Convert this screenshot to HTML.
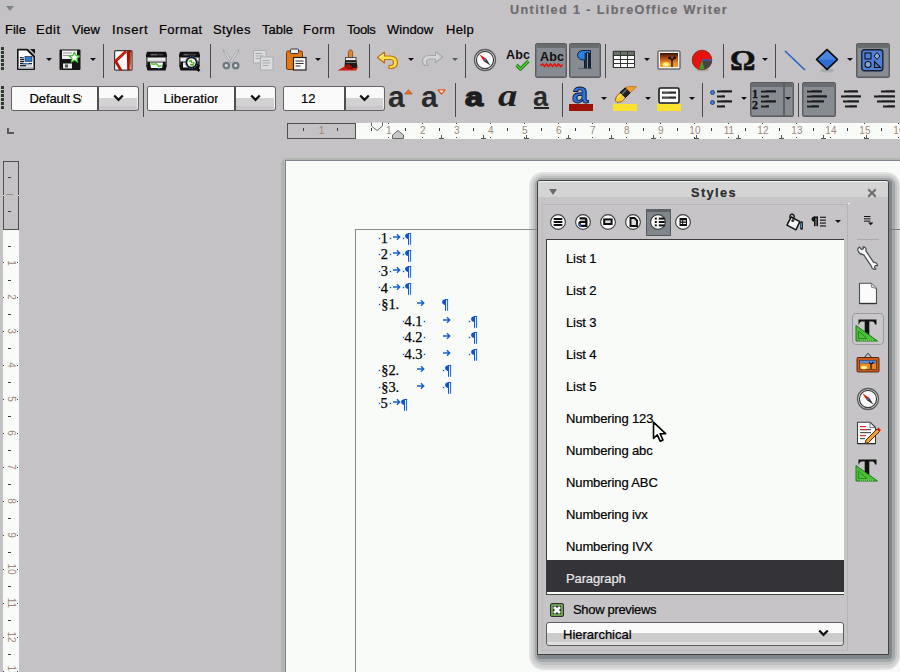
<!DOCTYPE html>
<html><head><meta charset="utf-8">
<style>
*{margin:0;padding:0;box-sizing:border-box}
html,body{width:900px;height:672px;overflow:hidden}
body{position:relative;background:#c5c2c6;font-family:"Liberation Sans",sans-serif;color:#000}
.a{position:absolute}
.t{position:absolute;white-space:nowrap;line-height:13px;font-size:13px;-webkit-text-stroke:.2px currentColor}
.sep{position:absolute;width:1px;background:#4a4a4a}
.grip{position:absolute;width:3px;background:repeating-linear-gradient(#2c3a2c 0 3px,transparent 3px 4px)}
.dd{position:absolute;width:0;height:0;border-left:3px solid transparent;border-right:3px solid transparent;border-top:3px solid #111}
.combo{position:absolute;height:25px;border:1px solid #626262;border-radius:2px;background:#f9faf9}
.cbtn{position:absolute;height:25px;border:1px solid #666;border-left:2px solid #4e4e4e;border-radius:0 3px 3px 0;box-shadow:inset -1px 0 0 #f4f4f4;background:linear-gradient(#f9faf9 0 11px,#d3d2d3 11px 19px,#c9c7c9 19px 23px,#e8e8e8 23px)}
.chev{position:absolute;width:7px;height:7px;border-right:2px solid #111;border-bottom:2px solid #111;transform:rotate(45deg)}
.tog{position:absolute;background:#868c92;border:1px solid #5a5c5e;border-radius:2px;box-shadow:inset 1px 0 0 #73767a,inset -1px 0 0 #73767a,inset 0 4px 0 #6a6d70,inset 0 -1px 0 #6f7275}
.doc{font-family:"Liberation Serif",serif;font-size:14.4px;line-height:16px;color:#000;-webkit-text-stroke:.25px #000}
.blu{color:#1f6fd1}
.li{position:absolute;left:566px;font-size:13px;line-height:13px;white-space:nowrap;letter-spacing:-.12px;-webkit-text-stroke:.2px currentColor}
.dot{width:1px;height:1px;background:#0a4fc0;box-shadow:0 0 0 .5px rgba(30,110,220,.35)}
.rn{position:absolute;top:126px;width:20px;text-align:center;font-size:10px;line-height:10px;color:#9c8878}
.vn{position:absolute;left:1px;width:20px;height:20px;text-align:center;font-size:10px;line-height:20px;color:#9c8878;transform:rotate(90deg)}
</style></head><body>

<!-- title bar -->
<div class="a" style="left:6px;top:6px;width:0;height:0;border-left:4.5px solid transparent;border-right:4.5px solid transparent;border-top:5px solid #7b8489"></div>
<div class="t" style="left:510px;top:4px;font-weight:bold;color:#6e6c6e;font-size:12.6px;letter-spacing:1.4px">Untitled 1 - LibreOffice Writer</div>

<!-- menu -->
<div class="t" style="left:5px;top:23px">File</div>
<div class="t" style="left:36px;top:23px;letter-spacing:.6px">Edit</div>
<div class="t" style="left:72px;top:23px">View</div>
<div class="t" style="left:112px;top:23px;letter-spacing:.6px">Insert</div>
<div class="t" style="left:159px;top:23px;letter-spacing:.4px">Format</div>
<div class="t" style="left:213px;top:23px;letter-spacing:.4px">Styles</div>
<div class="t" style="left:262px;top:23px">Table</div>
<div class="t" style="left:303px;top:23px;letter-spacing:.5px">Form</div>
<div class="t" style="left:347px;top:23px;letter-spacing:-.4px">Tools</div>
<div class="t" style="left:387px;top:23px">Window</div>
<div class="t" style="left:446px;top:23px;letter-spacing:.3px">Help</div>

<!-- toolbar 1 -->
<div class="grip" style="left:1px;top:47px;height:23px"></div>
<div class="sep" style="left:103px;top:44px;height:34px"></div>
<div class="sep" style="left:210px;top:44px;height:34px"></div>
<div class="sep" style="left:328px;top:44px;height:34px"></div>
<div class="sep" style="left:369px;top:44px;height:34px"></div>
<div class="sep" style="left:465px;top:44px;height:34px"></div>
<div class="sep" style="left:605px;top:44px;height:34px"></div>
<div class="sep" style="left:723px;top:44px;height:34px"></div>
<div class="sep" style="left:775px;top:44px;height:34px"></div>
<div class="tog" style="left:535px;top:43px;width:32px;height:35px"></div>
<div class="tog" style="left:569px;top:43px;width:32px;height:35px"></div>
<div class="tog" style="left:856px;top:43px;width:34px;height:35px"></div>

<!-- ===== toolbar 1 icons ===== -->
<!-- new doc -->
<svg class="a" style="left:16px;top:48px" width="20" height="24" viewBox="0 0 20 24">
<path d="M1.8 1.6H11.2L18.2 8.6V21.2H1.8Z" fill="#fbfbfb" stroke="#141414" stroke-width="1.6" stroke-linejoin="round"/>
<path d="M14 1H19V6Z" fill="#141414"/>
<path d="M11.2 1.6L18.2 8.6" stroke="#141414" stroke-width="1.8"/>
<rect x="2.6" y="18.5" width="14.8" height="2" fill="#b9c4c8"/>
<rect x="4" y="9" width="4" height="1.3" fill="#222"/><rect x="6" y="9" width="2" height="1.3" fill="#2b7ad6"/>
<rect x="4" y="11" width="4" height="1.3" fill="#222"/>
<rect x="4" y="13" width="4" height="1.3" fill="#222"/>
<rect x="9" y="8.6" width="7" height="4.8" fill="#2b7ad6" stroke="#111" stroke-width=".6"/>
<rect x="4" y="15" width="12" height="1.3" fill="#222"/><rect x="7" y="15" width="6" height="1.3" fill="#2b7ad6"/>
<rect x="4" y="17" width="6" height="1.3" fill="#222"/><rect x="10" y="17" width="6" height="1.3" fill="#d8d8d8"/>
<rect x="4" y="22.5" width="12" height="1.5" fill="#b9bdbc" opacity=".7"/>
</svg>
<div class="dd" style="left:46px;top:58px"></div>
<!-- save -->
<svg class="a" style="left:59px;top:49px" width="22" height="22" viewBox="0 0 22 22">
<rect x="0.5" y="0.5" width="21" height="20.5" rx="1" fill="#141414"/>
<rect x="3" y="1.5" width="15" height="8.5" fill="#f2f2f2"/>
<rect x="4" y="3.5" width="9" height="1" fill="#9a9a9a"/><rect x="4" y="6" width="9" height="1" fill="#9a9a9a"/>
<rect x="4" y="14.5" width="9" height="5" fill="#e8e8e8"/><rect x="6" y="15.5" width="3" height="3" fill="#555"/>
<path d="M15.5 3.2L17.1 6.6L20.8 7L18 9.5L18.8 13.2L15.5 11.3L12.2 13.2L13 9.5L10.2 7L13.9 6.6Z" fill="#f6fbf4" stroke="#3cb82c" stroke-width="1.1" stroke-linejoin="round"/>
<rect x="2" y="19.5" width="1" height="1" fill="#b04a20"/>
</svg>
<div class="dd" style="left:90px;top:58px"></div>
<!-- pdf -->
<svg class="a" style="left:114px;top:50px" width="19" height="21" viewBox="0 0 19 21">
<rect x="0.6" y="0.6" width="17.4" height="19.6" rx="1" fill="#fbfbfb" stroke="#3a3a3a" stroke-width="1.2"/>
<path d="M12 1.2L1.6 11.2L7 20.4" fill="none" stroke="#b81408" stroke-width="2.8" stroke-linejoin="miter"/>
<path d="M11.5 1.8L2.5 10.5" stroke="#ee2a10" stroke-width="1"/>
<path d="M12.8 1H17.6L16.2 20.2H13.2Z" fill="#a81008"/>
<path d="M16.8 2L15.6 19" stroke="#e87020" stroke-width=".8"/>
</svg>
<!-- print -->
<svg class="a" style="left:145px;top:51px" width="23" height="20" viewBox="0 0 23 20">
<path d="M2 0.8H21L22 4V14L20.5 19.5H2.5L1 14V4Z" fill="#111"/>
<rect x="5" y="2.8" width="13" height="1.8" rx=".6" fill="#3a3a3a"/>
<rect x="6.5" y="3.3" width="1" height=".9" fill="#bbb"/><rect x="8.5" y="3.3" width="1" height=".9" fill="#bbb"/><rect x="10.5" y="3.3" width="1" height=".9" fill="#bbb"/>
<rect x="1.5" y="6.5" width="20" height="4" fill="#e9e9e9"/>
<rect x="1.5" y="9.8" width="20" height="1.2" fill="#9a9a9a"/>
<rect x="1" y="6" width="1.5" height="8" fill="#555"/><rect x="20.5" y="6" width="1.5" height="8" fill="#555"/>
<path d="M5 11.5H18L17 17H6Z" fill="#f4f8f2"/>
<path d="M6 12.5L9 13.5L11 12.5L14 15.5L16.5 14.5" stroke="#58c03a" stroke-width="1.5" fill="none"/>
<rect x="13" y="17" width="1.5" height="1" fill="#2f6fd0"/>
</svg>
<!-- print preview -->
<svg class="a" style="left:178px;top:51px" width="23" height="21" viewBox="0 0 23 21">
<path d="M2 0.8H21L22 4V14L20.5 19.5H2.5L1 14V4Z" fill="#111"/>
<rect x="5" y="2.8" width="13" height="1.8" rx=".6" fill="#3a3a3a"/>
<rect x="6.5" y="3.3" width="1" height=".9" fill="#bbb"/><rect x="8.5" y="3.3" width="1" height=".9" fill="#bbb"/>
<rect x="1.5" y="6.5" width="20" height="4" fill="#e9e9e9"/>
<rect x="1" y="6" width="1.5" height="8" fill="#555"/><rect x="20.5" y="6" width="1.5" height="8" fill="#555"/>
<rect x="5" y="11.5" width="13" height="5" fill="#f0f0f0"/>
<circle cx="13.5" cy="11.5" r="6" fill="#111" stroke="#3b78d0" stroke-width="1" stroke-dasharray="1.3 1.3"/>
<circle cx="13.5" cy="11.5" r="4.2" fill="#f4f8f2"/>
<path d="M11 10.5L13 9.5L14 12M12 13.5L15 14L16 11" stroke="#58b03a" stroke-width="1.6" fill="none"/>
<path d="M17.5 16L21.5 20" stroke="#111" stroke-width="2.5"/>
</svg>
<!-- cut (disabled) -->
<svg class="a" style="left:222px;top:49px" width="18" height="21" viewBox="0 0 18 21">
<path d="M1 0.8C3.5 2 6.5 6 9.8 12.8L8.4 13.6C5 8 2 4 1 0.8Z" fill="#dcdcdc" stroke="#9aa0a4" stroke-width=".9"/>
<path d="M17 0.8C14.5 2 11.5 6 8.2 12.8L9.6 13.6C13 8 16 4 17 0.8Z" fill="#dcdcdc" stroke="#9aa0a4" stroke-width=".9"/>
<circle cx="4.3" cy="16.6" r="2.8" fill="none" stroke="#6f7a80" stroke-width="2.2"/>
<circle cx="13.7" cy="16.6" r="2.8" fill="none" stroke="#6f7a80" stroke-width="2.2"/>
<circle cx="4.3" cy="16.6" r="1" fill="#e8e8e8"/><circle cx="13.7" cy="16.6" r="1" fill="#e8e8e8"/>
</svg>
<!-- copy (disabled) -->
<svg class="a" style="left:253px;top:50px" width="21" height="21" viewBox="0 0 21 21">
<rect x="0.5" y="0.5" width="12.5" height="12.5" fill="#dcdcdc" stroke="#a9aeb0"/>
<rect x="2.5" y="3" width="7" height=".9" fill="#9fa5a8"/><rect x="2.5" y="5.5" width="8" height=".9" fill="#9fa5a8"/><rect x="2.5" y="8" width="6" height=".9" fill="#9fa5a8"/>
<rect x="7.5" y="7" width="12.5" height="13" fill="#dcdcdc" stroke="#a9aeb0"/>
<rect x="9.5" y="10" width="7" height=".9" fill="#9fa5a8"/><rect x="9.5" y="12.5" width="8" height=".9" fill="#9fa5a8"/><rect x="9.5" y="15" width="6" height=".9" fill="#9fa5a8"/>
</svg>
<!-- paste -->
<svg class="a" style="left:285px;top:48px" width="23" height="23" viewBox="0 0 23 23">
<rect x="1.5" y="3" width="16" height="18.5" rx="1.5" fill="#e07818" stroke="#7a3a08" stroke-width="1"/>
<rect x="5.5" y="1" width="8" height="4.5" rx="1" fill="#f0f0f0" stroke="#333" stroke-width="1"/>
<rect x="8.5" y="9.5" width="12.5" height="12.5" fill="#fafafa" stroke="#222" stroke-width="1.2"/>
<rect x="10.5" y="12.5" width="8" height="1" fill="#333"/><rect x="10.5" y="15" width="8" height="1" fill="#333"/><rect x="10.5" y="17.5" width="5" height="1" fill="#333"/>
</svg>
<div class="dd" style="left:315px;top:58px"></div>
<!-- clone formatting brush -->
<svg class="a" style="left:337px;top:49px" width="23" height="23" viewBox="0 0 23 23">
<path d="M13.5 1C15 1 15.6 2 15.6 3.5V8.5H11.4V3.5C11.4 2 12 1 13.5 1Z" fill="#e08a2c" stroke="#8a4a10" stroke-width=".9"/>
<rect x="8.5" y="8.5" width="10.5" height="3" fill="#e8e8e8" stroke="#333" stroke-width=".8"/>
<path d="M8 11.5H19.5L20.5 18.5L13 20.5L7.5 18.5Z" fill="#1a1a1a"/>
<path d="M9 13.5H19" stroke="#888" stroke-width=".9"/>
<path d="M0.5 21.5L7.5 17.5L13 20L21 18.5L19 21.5Z" fill="#d0180c"/>
<path d="M7.5 16L12 15L16 18.5L11 20Z" fill="#a01008"/>
</svg>
<!-- undo -->
<svg class="a" style="left:376px;top:50px" width="25" height="20" viewBox="0 0 25 20">
<path d="M8.5 2L1.5 7.5L8.5 13V9.5H14C16.5 9.5 17.5 11 17.5 12.5C17.5 14 16.5 15.5 14 15.5H13V18.5H14.5C19.5 18.5 21.5 15.5 21.5 12.5C21.5 9 19 6 14.5 6H8.5Z" fill="#fbe34a" stroke="#c06e10" stroke-width="1.2" stroke-linejoin="round"/>
<path d="M8 4L3 7.5" stroke="#fff7b0" stroke-width="1"/>
</svg>
<div class="dd" style="left:408px;top:58px"></div>
<!-- redo (disabled) -->
<svg class="a" style="left:420px;top:50px" width="24" height="18" viewBox="0 0 24 18">
<path d="M15.5 1.5L22.5 7L15.5 12.5V9H10C7.5 9 6.5 10.5 6.5 12C6.5 13.5 7 14.5 8 15.5H5C3 14 2.5 13 2.5 11.5C2.5 8 5 5.5 9.5 5.5H15.5Z" fill="#d4d6d5" stroke="#a4a9ab" stroke-width="1.2" stroke-linejoin="round"/>
</svg>
<div class="dd" style="left:452px;top:58px;border-top-color:#4f5a5a"></div>
<!-- navigator compass -->
<svg class="a" style="left:473px;top:48px" width="24" height="24" viewBox="0 0 24 24">
<circle cx="12" cy="12" r="10.5" fill="#e8e8e8" stroke="#5a5e60" stroke-width="1.3"/>
<circle cx="12" cy="12" r="8.6" fill="#fafafa" stroke="#3c3c3c" stroke-width="1.2"/>
<path d="M6.3 6.3L13.2 10.8L10.8 13.2Z" fill="#e3160c"/>
<path d="M17.7 17.7L10.8 13.2L13.2 10.8Z" fill="#383838"/>
<circle cx="12" cy="12" r="1" fill="#2c6cd0"/>
</svg>
<!-- spelling -->
<div class="a" style="left:506px;top:49px;font-weight:bold;font-size:12.5px;line-height:13px;color:#111;letter-spacing:.2px">Abc</div>
<svg class="a" style="left:515px;top:59px" width="15" height="12" viewBox="0 0 15 12">
<path d="M1.5 6L5.5 10L13.5 2" fill="none" stroke="#1f7a12" stroke-width="3.2" stroke-linejoin="round"/>
<path d="M1.5 6L5.5 10L13.5 2" fill="none" stroke="#52c83c" stroke-width="1.6" stroke-linejoin="round"/>
</svg>
<!-- auto spellcheck (toggled) -->
<div class="a" style="left:540px;top:51px;font-weight:bold;font-size:12.5px;line-height:13px;color:#111;letter-spacing:.2px">Abc</div>
<svg class="a" style="left:540px;top:63px" width="23" height="5" viewBox="0 0 23 5">
<path d="M0.5 2.5L2.5 1L4.5 3.5L6.5 1L8.5 3.5L10.5 1L12.5 3.5L14.5 1L16.5 3.5L18.5 1L20.5 3.5L22.5 1.5" fill="none" stroke="#e0160c" stroke-width="1.6"/>
</svg>
<!-- formatting marks (toggled) -->
<svg class="a" style="left:576px;top:49px" width="18" height="22" viewBox="0 0 18 22">
<path d="M2 19.5H16" stroke="#55585a" stroke-width="1.2" opacity=".7"/>
<path d="M7 1.5H14.5V19H12.5V3.5H10.5V19H8.5V11C4 11 1.5 9 1.5 6.2C1.5 3.5 3.8 1.5 7 1.5Z" fill="#2f7fe0" stroke="#0d1a30" stroke-width=".9"/>
<path d="M9.2 4V18.5M13.4 4V18.5" stroke="#111" stroke-width="1"/>
</svg>
<!-- table -->
<svg class="a" style="left:612px;top:50px" width="24" height="19" viewBox="0 0 24 19">
<rect x="0.7" y="0.7" width="22.3" height="17.4" rx="1" fill="#333833"/>
<rect x="2" y="1.8" width="6" height="3" fill="#6d736d"/><rect x="9" y="1.8" width="6" height="3" fill="#6d736d"/><rect x="16" y="1.8" width="6" height="3" fill="#6d736d"/>
<rect x="2" y="6" width="6" height="3" fill="#fff"/><rect x="9" y="6" width="6" height="3" fill="#fff"/><rect x="16" y="6" width="6" height="3" fill="#fff"/>
<rect x="2" y="10" width="6" height="3" fill="#fff"/><rect x="9" y="10" width="6" height="3" fill="#fff"/><rect x="16" y="10" width="6" height="3" fill="#fff"/>
<rect x="2" y="14" width="6" height="3" fill="#fff"/><rect x="9" y="14" width="6" height="3" fill="#fff"/><rect x="16" y="14" width="6" height="3" fill="#fff"/>
</svg>
<div class="dd" style="left:644px;top:58px"></div>
<!-- image -->
<svg class="a" style="left:657px;top:50px" width="24" height="20" viewBox="0 0 24 20">
<defs><linearGradient id="sk" x1="0" y1="0" x2="0" y2="1"><stop offset="0" stop-color="#2a1408"/><stop offset=".35" stop-color="#b04810"/><stop offset=".7" stop-color="#e88a28"/><stop offset="1" stop-color="#f0a030"/></linearGradient>
<radialGradient id="sun" cx=".5" cy=".5" r=".5"><stop offset="0" stop-color="#fffde0"/><stop offset=".5" stop-color="#ffe860"/><stop offset="1" stop-color="#f0a030" stop-opacity="0"/></radialGradient></defs>
<rect x="0.5" y="0.5" width="23" height="19" rx="1.5" fill="#3a3a3a"/>
<rect x="1.5" y="1.5" width="21" height="17" fill="#f2f2f2"/>
<rect x="3" y="3" width="18" height="14" fill="url(#sk)"/>
<ellipse cx="9" cy="14.5" rx="5" ry="3.5" fill="url(#sun)"/>
<path d="M15 17V10.5L12.5 6.5M15 10.5L18 6.5M13.5 8.5L11 8M16.5 8.5L19 8" stroke="#111" stroke-width="1.3" fill="none"/>
</svg>
<!-- chart -->
<svg class="a" style="left:691px;top:49px" width="23" height="23" viewBox="0 0 23 23">
<ellipse cx="11.5" cy="21" rx="7" ry="1.5" fill="#888" opacity=".35"/>
<circle cx="11" cy="11" r="9.8" fill="#e4140c" stroke="#8a1a0a" stroke-width=".8"/>
<path d="M11 11H20.8A9.8 9.8 0 0 1 13 20.6Z" fill="#444"/>
<path d="M11 11H20.8" stroke="#2d62d0" stroke-width="1.2"/>
<path d="M11 11L13.5 20.5L8 20.3Z" fill="#38a02a"/>
</svg>
<!-- omega -->
<div class="a" style="left:730px;top:46px;font-family:'Liberation Serif',serif;font-weight:bold;font-size:29px;line-height:29px;color:#111;-webkit-text-stroke:.5px #111;transform:scaleX(1.1);transform-origin:0 0">Ω</div>
<div class="dd" style="left:762px;top:58px"></div>
<!-- line -->
<svg class="a" style="left:784px;top:50px" width="22" height="21" viewBox="0 0 22 21">
<path d="M1 1L21 20" stroke="#2b62c4" stroke-width="1.6"/>
</svg>
<!-- diamond -->
<svg class="a" style="left:815px;top:48px" width="24" height="25" viewBox="0 0 24 25">
<ellipse cx="12" cy="22.5" rx="7" ry="2" fill="#8a9290" opacity=".45"/>
<path d="M12 1.5L22.5 11.5L12 21.5L1.5 11.5Z" fill="#2f6cd6" stroke="#111" stroke-width="1.4" stroke-linejoin="round"/>
<path d="M12 3L20.8 11.5H3.2Z" fill="#4a86e0"/>
<path d="M12 1.5L22.5 11.5L12 21.5L1.5 11.5Z" fill="none" stroke="#111" stroke-width="1.4" stroke-linejoin="round"/>
</svg>
<div class="dd" style="left:847px;top:58px"></div>
<!-- basic shapes (toggled) -->
<svg class="a" style="left:861px;top:49px" width="23" height="23" viewBox="0 0 23 23">
<rect x="0.8" y="0.8" width="21" height="21" rx="2.5" fill="#4f7fd8" stroke="#172030" stroke-width="1.4"/>
<rect x="4" y="4" width="6" height="6" fill="none" stroke="#111" stroke-width="1.1"/>
<path d="M16 3.5L19 7L16 10.5L13 7Z" fill="#8aa8d8" stroke="#111" stroke-width="1"/>
<circle cx="7" cy="15.5" r="3" fill="#8aa8d8" stroke="#111" stroke-width="1.1"/>
<path d="M13.5 12.5V18.5H19.5Z" fill="none" stroke="#111" stroke-width="1.1"/>
</svg>

<!-- toolbar 2 -->
<div class="grip" style="left:1px;top:86px;height:23px"></div>
<div class="combo" style="left:11px;top:86px;width:88px"></div>
<div class="cbtn" style="left:97px;top:86px;width:42px"></div><svg class="a" style="left:113px;top:94px" width="11" height="8" viewBox="0 0 11 8"><path d="M1.2 1.5L5.5 5.8L9.8 1.5" fill="none" stroke="#111" stroke-width="2.3"/></svg>
<div class="t" style="left:29.5px;top:92px;width:52px;overflow:hidden;letter-spacing:-.1px;word-spacing:-1px">Default Style</div>
<div class="sep" style="left:143px;top:83px;height:34px"></div>
<div class="combo" style="left:147px;top:86px;width:89px"></div>
<div class="cbtn" style="left:234px;top:86px;width:42px"></div><svg class="a" style="left:250px;top:94px" width="11" height="8" viewBox="0 0 11 8"><path d="M1.2 1.5L5.5 5.8L9.8 1.5" fill="none" stroke="#111" stroke-width="2.3"/></svg>
<div class="t" style="left:163.5px;top:92px;width:54px;overflow:hidden;letter-spacing:.1px">Liberation Serif</div>
<div class="combo" style="left:283px;top:86px;width:63px"></div>
<div class="cbtn" style="left:344px;top:86px;width:41px"></div><svg class="a" style="left:359px;top:94px" width="11" height="8" viewBox="0 0 11 8"><path d="M1.2 1.5L5.5 5.8L9.8 1.5" fill="none" stroke="#111" stroke-width="2.3"/></svg>
<div class="t" style="left:301px;top:92px">12</div>
<div class="sep" style="left:455px;top:83px;height:34px"></div>
<div class="sep" style="left:562px;top:83px;height:34px"></div>
<div class="sep" style="left:702px;top:83px;height:34px"></div>
<div class="sep" style="left:798px;top:83px;height:34px"></div>
<div class="tog" style="left:750px;top:82px;width:44px;height:35px"></div>
<div class="a" style="left:783px;top:83px;width:2px;height:33px;background:#5e6062"></div>
<div class="tog" style="left:802px;top:82px;width:34px;height:35px"></div>

<!-- ===== toolbar 2 icons ===== -->
<!-- grow font -->
<div class="a" style="left:388px;top:82px;font-weight:bold;font-size:30px;line-height:30px;color:#2a2a2a">a</div>
<svg class="a" style="left:404px;top:89px" width="9" height="6" viewBox="0 0 9 6"><path d="M4.5 0.7L8.3 5H0.7Z" fill="#f07020" stroke="#b04010" stroke-width=".6"/></svg>
<!-- shrink font -->
<div class="a" style="left:421px;top:82px;font-weight:bold;font-size:30px;line-height:30px;color:#2a2a2a">a</div>
<svg class="a" style="left:437px;top:89px" width="9" height="6" viewBox="0 0 9 6"><path d="M0.9 0.9H8.1L4.5 5Z" fill="#fff" stroke="#e05a18" stroke-width="1.3" stroke-linejoin="round"/></svg>
<!-- bold -->
<div class="a" style="left:465px;top:84px;font-weight:bold;font-size:25px;line-height:26px;color:#1e1e1e;-webkit-text-stroke:1.4px #1e1e1e;transform:scaleX(1.3);transform-origin:0 0">a</div>
<!-- italic -->
<div class="a" style="left:498px;top:80px;font-family:'Liberation Serif',serif;font-style:italic;font-weight:bold;font-size:31px;line-height:31px;color:#1e1e1e;transform:scaleX(1.25);transform-origin:0 0">a</div>
<!-- underline -->
<div class="a" style="left:533px;top:83px;font-weight:bold;font-size:27px;line-height:28px;color:#2a2a2a">a</div>
<div class="a" style="left:534px;top:107px;width:15px;height:2px;background:#222"></div>
<!-- font color -->
<div class="a" style="left:572px;top:79px;font-weight:bold;font-size:29px;line-height:29px;color:#2f74de;-webkit-text-stroke:.9px #0c1430">a</div>
<div class="a" style="left:569px;top:104px;width:24px;height:7px;background:#9b1208"></div>
<div class="dd" style="left:601px;top:97px"></div>
<!-- highlighter -->
<svg class="a" style="left:614px;top:86px" width="24" height="18" viewBox="0 0 24 18">
<path d="M3 16.5L1.2 14.5L2.5 10L7 6L12 11L8 15.5Z" fill="#f6d030" stroke="#b05a10" stroke-width="1"/>
<path d="M6 6.5L11.5 1.5L16.5 6.5L11.5 11.5Z" fill="#222" stroke="#111" stroke-width="1"/>
<path d="M11.5 1.5L14.5 0.5L22.5 0.8L16.5 6.5Z" fill="#f0a030" stroke="#c06a18" stroke-width=".8"/>
<path d="M8 8L12.5 3.5" stroke="#777" stroke-width="1.2"/>
<path d="M3.5 12L7.5 8" stroke="#fff6a0" stroke-width="1"/>
</svg>
<div class="a" style="left:613px;top:104px;width:24px;height:7px;background:#f8e22e"></div>
<div class="dd" style="left:645px;top:97px"></div>
<!-- paragraph background -->
<svg class="a" style="left:658px;top:87px" width="22" height="17" viewBox="0 0 22 17">
<rect x="1" y="1" width="20" height="15" rx="1.5" fill="#fafafa" stroke="#1a1a1a" stroke-width="1.6"/>
<rect x="4" y="4.5" width="14" height="2.2" fill="#2a2a2a"/><rect x="5" y="4.5" width="6" height=".8" fill="#aaa"/><rect x="4" y="9.5" width="14" height="2.2" fill="#2a2a2a"/><rect x="5" y="9.5" width="6" height=".8" fill="#aaa"/>
</svg>
<div class="a" style="left:657px;top:104px;width:24px;height:7px;background:#f8e22e"></div>
<div class="dd" style="left:689px;top:97px"></div>
<!-- bullets -->
<svg class="a" style="left:709px;top:89px" width="24" height="19" viewBox="0 0 24 19">
<circle cx="3.5" cy="3.5" r="2" fill="#3c80d8" stroke="#1a3060" stroke-width=".8"/>
<circle cx="3.5" cy="13.5" r="2" fill="#3c80d8" stroke="#1a3060" stroke-width=".8"/>
<rect x="8" y="1.2" width="15" height="2.3" rx=".6" fill="#1c1c1c"/><rect x="8.5" y="1.2" width="4" height=".8" fill="#9a9a9a" opacity=".6"/><rect x="8" y="6.2" width="8" height="2.3" rx=".6" fill="#1c1c1c"/><rect x="8.5" y="6.2" width="4" height=".8" fill="#9a9a9a" opacity=".6"/><rect x="8" y="11.2" width="15" height="2.3" rx=".6" fill="#1c1c1c"/><rect x="8.5" y="11.2" width="4" height=".8" fill="#9a9a9a" opacity=".6"/><rect x="8" y="16.2" width="8" height="2.3" rx=".6" fill="#1c1c1c"/><rect x="8.5" y="16.2" width="4" height=".8" fill="#9a9a9a" opacity=".6"/>
</svg>
<div class="dd" style="left:741px;top:97px"></div>
<!-- numbering (toggled) -->
<div class="a" style="left:752px;top:89px;font-family:'Liberation Serif',serif;font-weight:bold;font-size:12px;line-height:10.5px;color:#111;-webkit-text-stroke:.3px #111">1<br>2</div>
<svg class="a" style="left:760px;top:89px" width="18" height="19" viewBox="0 0 18 19">
<rect x="1" y="1.2" width="15" height="2.3" rx=".6" fill="#1c1c1c"/><rect x="1.5" y="1.2" width="4" height=".8" fill="#9a9a9a" opacity=".6"/><rect x="1" y="6.2" width="8" height="2.3" rx=".6" fill="#1c1c1c"/><rect x="1.5" y="6.2" width="4" height=".8" fill="#9a9a9a" opacity=".6"/><rect x="1" y="11.2" width="15" height="2.3" rx=".6" fill="#1c1c1c"/><rect x="1.5" y="11.2" width="4" height=".8" fill="#9a9a9a" opacity=".6"/><rect x="1" y="16.2" width="8" height="2.3" rx=".6" fill="#1c1c1c"/><rect x="1.5" y="16.2" width="4" height=".8" fill="#9a9a9a" opacity=".6"/>
</svg>
<div class="dd" style="left:785px;top:97px"></div>
<!-- align left (toggled) -->
<svg class="a" style="left:806px;top:89px" width="24" height="19" viewBox="0 0 24 19">
<rect x="1" y="1.2" width="15" height="2.3" rx=".6" fill="#1c1c1c"/><rect x="1.5" y="1.2" width="4" height=".8" fill="#9a9a9a" opacity=".6"/><rect x="1" y="6.2" width="20" height="2.3" rx=".6" fill="#1c1c1c"/><rect x="1.5" y="6.2" width="4" height=".8" fill="#9a9a9a" opacity=".6"/><rect x="1" y="11.2" width="17" height="2.3" rx=".6" fill="#1c1c1c"/><rect x="1.5" y="11.2" width="4" height=".8" fill="#9a9a9a" opacity=".6"/><rect x="1" y="16.2" width="12" height="2.3" rx=".6" fill="#1c1c1c"/><rect x="1.5" y="16.2" width="4" height=".8" fill="#9a9a9a" opacity=".6"/>
</svg>
<!-- align center -->
<svg class="a" style="left:839px;top:89px" width="24" height="19" viewBox="0 0 24 19">
<rect x="5" y="1.2" width="14" height="2.3" rx=".6" fill="#1c1c1c"/><rect x="5.5" y="1.2" width="4" height=".8" fill="#9a9a9a" opacity=".6"/><rect x="2" y="6.2" width="20" height="2.3" rx=".6" fill="#1c1c1c"/><rect x="2.5" y="6.2" width="4" height=".8" fill="#9a9a9a" opacity=".6"/><rect x="4" y="11.2" width="16" height="2.3" rx=".6" fill="#1c1c1c"/><rect x="4.5" y="11.2" width="4" height=".8" fill="#9a9a9a" opacity=".6"/><rect x="6" y="16.2" width="12" height="2.3" rx=".6" fill="#1c1c1c"/><rect x="6.5" y="16.2" width="4" height=".8" fill="#9a9a9a" opacity=".6"/>
</svg>
<!-- align right -->
<svg class="a" style="left:873px;top:89px" width="24" height="19" viewBox="0 0 24 19">
<rect x="8" y="1.2" width="14" height="2.3" rx=".6" fill="#1c1c1c"/><rect x="8.5" y="1.2" width="4" height=".8" fill="#9a9a9a" opacity=".6"/><rect x="1" y="6.2" width="21" height="2.3" rx=".6" fill="#1c1c1c"/><rect x="1.5" y="6.2" width="4" height=".8" fill="#9a9a9a" opacity=".6"/><rect x="4" y="11.2" width="18" height="2.3" rx=".6" fill="#1c1c1c"/><rect x="4.5" y="11.2" width="4" height=".8" fill="#9a9a9a" opacity=".6"/><rect x="10" y="16.2" width="12" height="2.3" rx=".6" fill="#1c1c1c"/><rect x="10.5" y="16.2" width="4" height=".8" fill="#9a9a9a" opacity=".6"/>
</svg>
<!-- ruler -->
<div class="a" style="left:7px;top:128px;width:7px;height:6px;border-left:2px solid #5a5a5a;border-bottom:2px solid #5a5a5a"></div>
<div class="a" style="left:287px;top:123px;width:69px;height:16px;background:#c5c2c6;border:1px solid #4e524e"></div>
<div class="a" style="left:356px;top:123px;width:544px;height:16px;background:#f9fbf9"></div>

<div class="a" style="left:303px;top:128px;width:1px;height:3px;background:#3a3a3a"></div>
<div class="a" style="left:337px;top:128px;width:1px;height:3px;background:#3a3a3a"></div>
<div class="rn" style="left:311.5px">1</div>
<div class="a" style="left:371px;top:128px;width:1px;height:3px;background:#3a3a3a"></div>
<div class="rn" style="left:378.9px">1</div>
<div class="a" style="left:388px;top:123px;width:1px;height:1px;background:#444"></div>
<div class="a" style="left:388px;top:137px;width:1px;height:1px;background:#444"></div>
<div class="a" style="left:405px;top:128px;width:1px;height:3px;background:#3a3a3a"></div>
<div class="rn" style="left:412.9px">2</div>
<div class="a" style="left:422px;top:123px;width:1px;height:1px;background:#444"></div>
<div class="a" style="left:422px;top:137px;width:1px;height:1px;background:#444"></div>
<div class="a" style="left:439px;top:128px;width:1px;height:3px;background:#3a3a3a"></div>
<div class="rn" style="left:446.9px">3</div>
<div class="a" style="left:456px;top:123px;width:1px;height:1px;background:#444"></div>
<div class="a" style="left:456px;top:137px;width:1px;height:1px;background:#444"></div>
<div class="a" style="left:473px;top:128px;width:1px;height:3px;background:#3a3a3a"></div>
<div class="rn" style="left:480.9px">4</div>
<div class="a" style="left:490px;top:123px;width:1px;height:1px;background:#444"></div>
<div class="a" style="left:490px;top:137px;width:1px;height:1px;background:#444"></div>
<div class="a" style="left:507px;top:128px;width:1px;height:3px;background:#3a3a3a"></div>
<div class="rn" style="left:514.9px">5</div>
<div class="a" style="left:524px;top:123px;width:1px;height:1px;background:#444"></div>
<div class="a" style="left:524px;top:137px;width:1px;height:1px;background:#444"></div>
<div class="a" style="left:541px;top:128px;width:1px;height:3px;background:#3a3a3a"></div>
<div class="rn" style="left:548.9px">6</div>
<div class="a" style="left:558px;top:123px;width:1px;height:1px;background:#444"></div>
<div class="a" style="left:558px;top:137px;width:1px;height:1px;background:#444"></div>
<div class="a" style="left:575px;top:128px;width:1px;height:3px;background:#3a3a3a"></div>
<div class="rn" style="left:582.9px">7</div>
<div class="a" style="left:592px;top:123px;width:1px;height:1px;background:#444"></div>
<div class="a" style="left:592px;top:137px;width:1px;height:1px;background:#444"></div>
<div class="a" style="left:609px;top:128px;width:1px;height:3px;background:#3a3a3a"></div>
<div class="rn" style="left:616.9px">8</div>
<div class="a" style="left:626px;top:123px;width:1px;height:1px;background:#444"></div>
<div class="a" style="left:626px;top:137px;width:1px;height:1px;background:#444"></div>
<div class="a" style="left:643px;top:128px;width:1px;height:3px;background:#3a3a3a"></div>
<div class="rn" style="left:650.9px">9</div>
<div class="a" style="left:660px;top:123px;width:1px;height:1px;background:#444"></div>
<div class="a" style="left:660px;top:137px;width:1px;height:1px;background:#444"></div>
<div class="a" style="left:677px;top:128px;width:1px;height:3px;background:#3a3a3a"></div>
<div class="rn" style="left:684.9px">10</div>
<div class="a" style="left:694px;top:123px;width:1px;height:1px;background:#444"></div>
<div class="a" style="left:694px;top:137px;width:1px;height:1px;background:#444"></div>
<div class="a" style="left:711px;top:128px;width:1px;height:3px;background:#3a3a3a"></div>
<div class="rn" style="left:718.9px">11</div>
<div class="a" style="left:728px;top:123px;width:1px;height:1px;background:#444"></div>
<div class="a" style="left:728px;top:137px;width:1px;height:1px;background:#444"></div>
<div class="a" style="left:745px;top:128px;width:1px;height:3px;background:#3a3a3a"></div>
<div class="rn" style="left:752.9px">12</div>
<div class="a" style="left:762px;top:123px;width:1px;height:1px;background:#444"></div>
<div class="a" style="left:762px;top:137px;width:1px;height:1px;background:#444"></div>
<div class="a" style="left:779px;top:128px;width:1px;height:3px;background:#3a3a3a"></div>
<div class="rn" style="left:786.9px">13</div>
<div class="a" style="left:796px;top:123px;width:1px;height:1px;background:#444"></div>
<div class="a" style="left:796px;top:137px;width:1px;height:1px;background:#444"></div>
<div class="a" style="left:813px;top:128px;width:1px;height:3px;background:#3a3a3a"></div>
<div class="rn" style="left:820.9px">14</div>
<div class="a" style="left:830px;top:123px;width:1px;height:1px;background:#444"></div>
<div class="a" style="left:830px;top:137px;width:1px;height:1px;background:#444"></div>
<div class="a" style="left:847px;top:128px;width:1px;height:3px;background:#3a3a3a"></div>
<div class="rn" style="left:854.9px">15</div>
<div class="a" style="left:864px;top:123px;width:1px;height:1px;background:#444"></div>
<div class="a" style="left:864px;top:137px;width:1px;height:1px;background:#444"></div>
<div class="a" style="left:881px;top:128px;width:1px;height:3px;background:#3a3a3a"></div>
<div class="rn" style="left:888.9px">16</div>
<div class="a" style="left:898px;top:123px;width:1px;height:1px;background:#444"></div>
<div class="a" style="left:898px;top:137px;width:1px;height:1px;background:#444"></div>
<div class="a" style="left:915px;top:128px;width:1px;height:3px;background:#3a3a3a"></div>
<div class="a" style="left:439px;top:138px;width:5px;height:1px;background:#555"></div>
<div class="a" style="left:441px;top:135px;width:1px;height:3px;background:#555"></div>
<div class="a" style="left:481px;top:138px;width:5px;height:1px;background:#555"></div>
<div class="a" style="left:483px;top:135px;width:1px;height:3px;background:#555"></div>
<div class="a" style="left:524px;top:138px;width:5px;height:1px;background:#555"></div>
<div class="a" style="left:526px;top:135px;width:1px;height:3px;background:#555"></div>
<div class="a" style="left:566px;top:138px;width:5px;height:1px;background:#555"></div>
<div class="a" style="left:568px;top:135px;width:1px;height:3px;background:#555"></div>
<div class="a" style="left:609px;top:138px;width:5px;height:1px;background:#555"></div>
<div class="a" style="left:611px;top:135px;width:1px;height:3px;background:#555"></div>
<div class="a" style="left:651px;top:138px;width:5px;height:1px;background:#555"></div>
<div class="a" style="left:653px;top:135px;width:1px;height:3px;background:#555"></div>
<div class="a" style="left:694px;top:138px;width:5px;height:1px;background:#555"></div>
<div class="a" style="left:696px;top:135px;width:1px;height:3px;background:#555"></div>
<div class="a" style="left:736px;top:138px;width:5px;height:1px;background:#555"></div>
<div class="a" style="left:738px;top:135px;width:1px;height:3px;background:#555"></div>
<div class="a" style="left:779px;top:138px;width:5px;height:1px;background:#555"></div>
<div class="a" style="left:781px;top:135px;width:1px;height:3px;background:#555"></div>
<div class="a" style="left:821px;top:138px;width:5px;height:1px;background:#555"></div>
<div class="a" style="left:823px;top:135px;width:1px;height:3px;background:#555"></div>
<div class="a" style="left:864px;top:138px;width:5px;height:1px;background:#555"></div>
<div class="a" style="left:866px;top:135px;width:1px;height:3px;background:#555"></div>
<div class="a" style="left:906px;top:138px;width:5px;height:1px;background:#555"></div>
<div class="a" style="left:908px;top:135px;width:1px;height:3px;background:#555"></div>
<svg class="a" style="left:371px;top:122px" width="12" height="9" viewBox="0 0 12 9"><path d="M0.5 0.5V4L6 8.5L11.5 4V0.5" fill="#f9fbf9" stroke="#676767" stroke-width="1"/></svg>
<svg class="a" style="left:392px;top:130px" width="12" height="9" viewBox="0 0 12 9"><path d="M0.5 8.5V5L6 0.5L11.5 5V8.5Z" fill="#c8c6c8" stroke="#676767" stroke-width="1"/></svg>
<!-- vertical ruler -->
<div class="a" style="left:3px;top:161px;width:16px;height:69px;border:1px solid #4e524e"></div>
<div class="a" style="left:3px;top:230px;width:16px;height:442px;background:#f9fbf9"></div>

<div class="a" style="left:8px;top:177px;width:3px;height:1px;background:#3a3a3a"></div>
<div class="a" style="left:8px;top:211px;width:3px;height:1px;background:#3a3a3a"></div>
<div class="a" style="left:7px;top:194px;width:6px;height:1px;background:#8c9294"></div><div class="a" style="left:6px;top:194px;width:1px;height:1px;background:#d09040"></div><div class="a" style="left:3px;top:195px;width:1px;height:1px;background:#f0f0f0"></div><div class="a" style="left:18px;top:195px;width:1px;height:1px;background:#f0f0f0"></div>
<div class="vn" style="top:252.5px">1</div>
<div class="a" style="left:3px;top:262px;width:1px;height:1px;background:#444"></div>
<div class="a" style="left:17px;top:262px;width:1px;height:1px;background:#444"></div>
<div class="a" style="left:8px;top:246px;width:3px;height:1px;background:#3a3a3a"></div>
<div class="vn" style="top:286.6px">2</div>
<div class="a" style="left:3px;top:297px;width:1px;height:1px;background:#444"></div>
<div class="a" style="left:17px;top:297px;width:1px;height:1px;background:#444"></div>
<div class="a" style="left:8px;top:280px;width:3px;height:1px;background:#3a3a3a"></div>
<div class="vn" style="top:320.6px">3</div>
<div class="a" style="left:3px;top:331px;width:1px;height:1px;background:#444"></div>
<div class="a" style="left:17px;top:331px;width:1px;height:1px;background:#444"></div>
<div class="a" style="left:8px;top:314px;width:3px;height:1px;background:#3a3a3a"></div>
<div class="vn" style="top:354.6px">4</div>
<div class="a" style="left:3px;top:365px;width:1px;height:1px;background:#444"></div>
<div class="a" style="left:17px;top:365px;width:1px;height:1px;background:#444"></div>
<div class="a" style="left:8px;top:348px;width:3px;height:1px;background:#3a3a3a"></div>
<div class="vn" style="top:388.7px">5</div>
<div class="a" style="left:3px;top:399px;width:1px;height:1px;background:#444"></div>
<div class="a" style="left:17px;top:399px;width:1px;height:1px;background:#444"></div>
<div class="a" style="left:8px;top:382px;width:3px;height:1px;background:#3a3a3a"></div>
<div class="vn" style="top:422.8px">6</div>
<div class="a" style="left:3px;top:433px;width:1px;height:1px;background:#444"></div>
<div class="a" style="left:17px;top:433px;width:1px;height:1px;background:#444"></div>
<div class="a" style="left:8px;top:416px;width:3px;height:1px;background:#3a3a3a"></div>
<div class="vn" style="top:456.8px">7</div>
<div class="a" style="left:3px;top:467px;width:1px;height:1px;background:#444"></div>
<div class="a" style="left:17px;top:467px;width:1px;height:1px;background:#444"></div>
<div class="a" style="left:8px;top:450px;width:3px;height:1px;background:#3a3a3a"></div>
<div class="vn" style="top:490.8px">8</div>
<div class="a" style="left:3px;top:501px;width:1px;height:1px;background:#444"></div>
<div class="a" style="left:17px;top:501px;width:1px;height:1px;background:#444"></div>
<div class="a" style="left:8px;top:484px;width:3px;height:1px;background:#3a3a3a"></div>
<div class="vn" style="top:524.9px">9</div>
<div class="a" style="left:3px;top:535px;width:1px;height:1px;background:#444"></div>
<div class="a" style="left:17px;top:535px;width:1px;height:1px;background:#444"></div>
<div class="a" style="left:8px;top:518px;width:3px;height:1px;background:#3a3a3a"></div>
<div class="vn" style="top:559.0px">10</div>
<div class="a" style="left:3px;top:569px;width:1px;height:1px;background:#444"></div>
<div class="a" style="left:17px;top:569px;width:1px;height:1px;background:#444"></div>
<div class="a" style="left:8px;top:552px;width:3px;height:1px;background:#3a3a3a"></div>
<div class="vn" style="top:593.0px">11</div>
<div class="a" style="left:3px;top:603px;width:1px;height:1px;background:#444"></div>
<div class="a" style="left:17px;top:603px;width:1px;height:1px;background:#444"></div>
<div class="a" style="left:8px;top:586px;width:3px;height:1px;background:#3a3a3a"></div>
<div class="vn" style="top:627.0px">12</div>
<div class="a" style="left:3px;top:637px;width:1px;height:1px;background:#444"></div>
<div class="a" style="left:17px;top:637px;width:1px;height:1px;background:#444"></div>
<div class="a" style="left:8px;top:620px;width:3px;height:1px;background:#3a3a3a"></div>
<div class="vn" style="top:661.1px">13</div>
<div class="a" style="left:3px;top:671px;width:1px;height:1px;background:#444"></div>
<div class="a" style="left:17px;top:671px;width:1px;height:1px;background:#444"></div>
<div class="a" style="left:8px;top:654px;width:3px;height:1px;background:#3a3a3a"></div>
<div class="a" style="left:8px;top:688px;width:3px;height:1px;background:#3a3a3a"></div>
<!-- page -->
<div class="a" style="left:281px;top:158px;width:620px;height:520px;background:#b3b5b3;border-radius:6px 0 0 0"></div>
<div class="a" style="left:285px;top:160px;width:620px;height:520px;background:#7e868c"></div>
<div class="a" style="left:286px;top:161px;width:620px;height:520px;background:#f9fbf9"></div>
<div class="a" style="left:355px;top:229px;width:560px;height:1px;background:#8c8c8c"></div>
<div class="a" style="left:355px;top:229px;width:1px;height:460px;background:#8c8c8c"></div>

<!-- doc text -->
<div class="a dot" style="left:379px;top:238px"></div>
<div class="a doc" style="left:380.8px;top:229.8px">1</div>
<div class="a dot" style="left:390px;top:238px"></div>
<svg class="a" style="left:393px;top:232.8px" width="8" height="8" viewBox="0 0 8 8"><path d="M0 4H6.6M3.9 1.2L6.8 4L3.9 6.8" fill="none" stroke="#1560d0" stroke-width="1.3"/></svg>
<div class="a dot" style="left:403px;top:238px"></div>
<svg class="a" style="left:405px;top:233px" width="7" height="12" viewBox="0 0 7 12"><path d="M3.6 0.2C1.4 0.2 0.1 1.5 0.1 3.1C0.1 4.7 1.4 6 3.6 6Z" fill="#0f52c4"/><rect x="3" y="0" width="1.1" height="11.8" fill="#1556c8"/><rect x="5" y="0" width="1.1" height="11.8" fill="#2a74e0"/><rect x="3" y="0" width="3.1" height="1" fill="#1556c8"/></svg>
<div class="a dot" style="left:379px;top:254px"></div>
<div class="a doc" style="left:380.8px;top:246.4px">2</div>
<div class="a dot" style="left:390px;top:254px"></div>
<svg class="a" style="left:393px;top:249.4px" width="8" height="8" viewBox="0 0 8 8"><path d="M0 4H6.6M3.9 1.2L6.8 4L3.9 6.8" fill="none" stroke="#1560d0" stroke-width="1.3"/></svg>
<div class="a dot" style="left:403px;top:254px"></div>
<svg class="a" style="left:405px;top:250px" width="7" height="12" viewBox="0 0 7 12"><path d="M3.6 0.2C1.4 0.2 0.1 1.5 0.1 3.1C0.1 4.7 1.4 6 3.6 6Z" fill="#0f52c4"/><rect x="3" y="0" width="1.1" height="11.8" fill="#1556c8"/><rect x="5" y="0" width="1.1" height="11.8" fill="#2a74e0"/><rect x="3" y="0" width="3.1" height="1" fill="#1556c8"/></svg>
<div class="a dot" style="left:379px;top:271px"></div>
<div class="a doc" style="left:380.8px;top:262.9px">3</div>
<div class="a dot" style="left:390px;top:271px"></div>
<svg class="a" style="left:393px;top:265.9px" width="8" height="8" viewBox="0 0 8 8"><path d="M0 4H6.6M3.9 1.2L6.8 4L3.9 6.8" fill="none" stroke="#1560d0" stroke-width="1.3"/></svg>
<div class="a dot" style="left:403px;top:271px"></div>
<svg class="a" style="left:405px;top:266px" width="7" height="12" viewBox="0 0 7 12"><path d="M3.6 0.2C1.4 0.2 0.1 1.5 0.1 3.1C0.1 4.7 1.4 6 3.6 6Z" fill="#0f52c4"/><rect x="3" y="0" width="1.1" height="11.8" fill="#1556c8"/><rect x="5" y="0" width="1.1" height="11.8" fill="#2a74e0"/><rect x="3" y="0" width="3.1" height="1" fill="#1556c8"/></svg>
<div class="a dot" style="left:379px;top:287px"></div>
<div class="a doc" style="left:380.8px;top:279.5px">4</div>
<div class="a dot" style="left:390px;top:287px"></div>
<svg class="a" style="left:393px;top:282.5px" width="8" height="8" viewBox="0 0 8 8"><path d="M0 4H6.6M3.9 1.2L6.8 4L3.9 6.8" fill="none" stroke="#1560d0" stroke-width="1.3"/></svg>
<div class="a dot" style="left:403px;top:287px"></div>
<svg class="a" style="left:405px;top:283px" width="7" height="12" viewBox="0 0 7 12"><path d="M3.6 0.2C1.4 0.2 0.1 1.5 0.1 3.1C0.1 4.7 1.4 6 3.6 6Z" fill="#0f52c4"/><rect x="3" y="0" width="1.1" height="11.8" fill="#1556c8"/><rect x="5" y="0" width="1.1" height="11.8" fill="#2a74e0"/><rect x="3" y="0" width="3.1" height="1" fill="#1556c8"/></svg>
<div class="a dot" style="left:379px;top:304px"></div>
<div class="a doc" style="left:381.2px;top:296.0px">§1.</div>
<svg class="a" style="left:417px;top:299.0px" width="8" height="8" viewBox="0 0 8 8"><path d="M0 4H6.6M3.9 1.2L6.8 4L3.9 6.8" fill="none" stroke="#1560d0" stroke-width="1.3"/></svg>
<svg class="a" style="left:442px;top:299px" width="7" height="12" viewBox="0 0 7 12"><path d="M3.6 0.2C1.4 0.2 0.1 1.5 0.1 3.1C0.1 4.7 1.4 6 3.6 6Z" fill="#0f52c4"/><rect x="3" y="0" width="1.1" height="11.8" fill="#1556c8"/><rect x="5" y="0" width="1.1" height="11.8" fill="#2a74e0"/><rect x="3" y="0" width="3.1" height="1" fill="#1556c8"/></svg>
<div class="a dot" style="left:403px;top:321px"></div>
<div class="a doc" style="left:404.5px;top:312.6px">4.1</div>
<div class="a dot" style="left:424px;top:321px"></div>
<svg class="a" style="left:443px;top:315.6px" width="8" height="8" viewBox="0 0 8 8"><path d="M0 4H6.6M3.9 1.2L6.8 4L3.9 6.8" fill="none" stroke="#1560d0" stroke-width="1.3"/></svg>
<div class="a dot" style="left:469px;top:321px"></div>
<svg class="a" style="left:471px;top:316px" width="7" height="12" viewBox="0 0 7 12"><path d="M3.6 0.2C1.4 0.2 0.1 1.5 0.1 3.1C0.1 4.7 1.4 6 3.6 6Z" fill="#0f52c4"/><rect x="3" y="0" width="1.1" height="11.8" fill="#1556c8"/><rect x="5" y="0" width="1.1" height="11.8" fill="#2a74e0"/><rect x="3" y="0" width="3.1" height="1" fill="#1556c8"/></svg>
<div class="a dot" style="left:403px;top:337px"></div>
<div class="a doc" style="left:404.5px;top:329.2px">4.2</div>
<div class="a dot" style="left:424px;top:337px"></div>
<svg class="a" style="left:443px;top:332.2px" width="8" height="8" viewBox="0 0 8 8"><path d="M0 4H6.6M3.9 1.2L6.8 4L3.9 6.8" fill="none" stroke="#1560d0" stroke-width="1.3"/></svg>
<div class="a dot" style="left:469px;top:337px"></div>
<svg class="a" style="left:471px;top:332px" width="7" height="12" viewBox="0 0 7 12"><path d="M3.6 0.2C1.4 0.2 0.1 1.5 0.1 3.1C0.1 4.7 1.4 6 3.6 6Z" fill="#0f52c4"/><rect x="3" y="0" width="1.1" height="11.8" fill="#1556c8"/><rect x="5" y="0" width="1.1" height="11.8" fill="#2a74e0"/><rect x="3" y="0" width="3.1" height="1" fill="#1556c8"/></svg>
<div class="a dot" style="left:403px;top:354px"></div>
<div class="a doc" style="left:404.5px;top:345.7px">4.3</div>
<div class="a dot" style="left:424px;top:354px"></div>
<svg class="a" style="left:443px;top:348.7px" width="8" height="8" viewBox="0 0 8 8"><path d="M0 4H6.6M3.9 1.2L6.8 4L3.9 6.8" fill="none" stroke="#1560d0" stroke-width="1.3"/></svg>
<div class="a dot" style="left:469px;top:354px"></div>
<svg class="a" style="left:471px;top:349px" width="7" height="12" viewBox="0 0 7 12"><path d="M3.6 0.2C1.4 0.2 0.1 1.5 0.1 3.1C0.1 4.7 1.4 6 3.6 6Z" fill="#0f52c4"/><rect x="3" y="0" width="1.1" height="11.8" fill="#1556c8"/><rect x="5" y="0" width="1.1" height="11.8" fill="#2a74e0"/><rect x="3" y="0" width="3.1" height="1" fill="#1556c8"/></svg>
<div class="a dot" style="left:379px;top:370px"></div>
<div class="a doc" style="left:381.2px;top:362.3px">§2.</div>
<svg class="a" style="left:417px;top:365.3px" width="8" height="8" viewBox="0 0 8 8"><path d="M0 4H6.6M3.9 1.2L6.8 4L3.9 6.8" fill="none" stroke="#1560d0" stroke-width="1.3"/></svg>
<div class="a dot" style="left:443px;top:370px"></div>
<svg class="a" style="left:445px;top:365px" width="7" height="12" viewBox="0 0 7 12"><path d="M3.6 0.2C1.4 0.2 0.1 1.5 0.1 3.1C0.1 4.7 1.4 6 3.6 6Z" fill="#0f52c4"/><rect x="3" y="0" width="1.1" height="11.8" fill="#1556c8"/><rect x="5" y="0" width="1.1" height="11.8" fill="#2a74e0"/><rect x="3" y="0" width="3.1" height="1" fill="#1556c8"/></svg>
<div class="a dot" style="left:379px;top:387px"></div>
<div class="a doc" style="left:381.2px;top:378.8px">§3.</div>
<svg class="a" style="left:417px;top:381.8px" width="8" height="8" viewBox="0 0 8 8"><path d="M0 4H6.6M3.9 1.2L6.8 4L3.9 6.8" fill="none" stroke="#1560d0" stroke-width="1.3"/></svg>
<div class="a dot" style="left:443px;top:387px"></div>
<svg class="a" style="left:445px;top:382px" width="7" height="12" viewBox="0 0 7 12"><path d="M3.6 0.2C1.4 0.2 0.1 1.5 0.1 3.1C0.1 4.7 1.4 6 3.6 6Z" fill="#0f52c4"/><rect x="3" y="0" width="1.1" height="11.8" fill="#1556c8"/><rect x="5" y="0" width="1.1" height="11.8" fill="#2a74e0"/><rect x="3" y="0" width="3.1" height="1" fill="#1556c8"/></svg>
<div class="a dot" style="left:379px;top:403px"></div>
<div class="a doc" style="left:380.5px;top:395.4px">5</div>
<div class="a dot" style="left:390px;top:403px"></div>
<svg class="a" style="left:393px;top:398.4px" width="8" height="8" viewBox="0 0 8 8"><path d="M0 4H6.6M3.9 1.2L6.8 4L3.9 6.8" fill="none" stroke="#1560d0" stroke-width="1.3"/></svg>
<svg class="a" style="left:401px;top:399px" width="7" height="12" viewBox="0 0 7 12"><path d="M3.6 0.2C1.4 0.2 0.1 1.5 0.1 3.1C0.1 4.7 1.4 6 3.6 6Z" fill="#0f52c4"/><rect x="3" y="0" width="1.1" height="11.8" fill="#1556c8"/><rect x="5" y="0" width="1.1" height="11.8" fill="#2a74e0"/><rect x="3" y="0" width="3.1" height="1" fill="#1556c8"/></svg>

<!-- styles panel -->
<div class="a" style="left:529px;top:172px;width:371px;height:498px;border-radius:14px;background:#e2e2e2"></div>
<div class="a" style="left:531px;top:174px;width:368px;height:494px;border-radius:12px;background:#d2d2d2"></div>
<div class="a" style="left:533px;top:176px;width:364px;height:489px;border-radius:10px;background:#c0c1c1"></div>
<div class="a" style="left:535px;top:178px;width:360px;height:484px;border-radius:7px;background:#a4a8aa"></div>
<div class="a" style="left:537px;top:180px;width:355px;height:479px;border-radius:4px;background:#80868a"></div>
<div class="a" style="left:889px;top:229px;width:11px;height:1px;background:#7a7c7c"></div>
<div class="a" style="left:528px;top:229px;width:9px;height:1px;background:#8a8c8c"></div>
<div class="a" style="left:537px;top:180px;width:352px;height:475px;border:1px solid #3f4240;border-radius:3px 3px 0 0;background:#c6c4c7"></div>
<div class="a" style="left:538px;top:181px;width:350px;height:16px;background:#d5d4d5;border-top:1px solid #f2f2f2;border-radius:2px 2px 0 0"></div>
<div class="a" style="left:549px;top:189px;width:0;height:0;border-left:4.5px solid transparent;border-right:4.5px solid transparent;border-top:6px solid #676b6e"></div>
<div class="t" style="left:691px;top:186px;font-weight:bold;color:#2c2c2c;font-size:12.8px;letter-spacing:1.4px">Styles</div>
<svg class="a" style="left:867px;top:188px" width="10" height="10" viewBox="0 0 10 10"><path d="M1.2 1.2L8.8 8.8M8.8 1.2L1.2 8.8" stroke="#6f6f6f" stroke-width="2.2"/></svg>
<div class="a" style="left:542px;top:204px;width:306px;height:447px;border-top:1px solid #b3b6b3;border-right:1px solid #b3b6b3"></div>
<div class="a" style="left:542px;top:204px;width:1px;height:447px;background:#bdbdbd"></div>
<div class="a" style="left:542px;top:650px;width:306px;height:1px;background:#b8bab8"></div>
<div class="a" style="left:848px;top:203px;width:2px;height:1px;background:#f4f4f4"></div>
<div class="a" style="left:646px;top:209px;width:25px;height:27px;background:#80868c;border:1px solid #585b5e;border-top:3px solid #5e6264"></div>
<div class="a" style="left:546px;top:239px;width:298px;height:356px;background:#f9fbf9;border-top:1px solid #3c3c3c;border-left:1px solid #3c3c3c;border-bottom:1px solid #3c4a3c"></div>
<div class="a" style="left:547px;top:560px;width:297px;height:32px;background:#343438"></div>
<div class="a" style="left:547px;top:592px;width:297px;height:2px;background:#fdfdfd"></div>
<div class="li" style="top:252px">List 1</div>
<div class="li" style="top:284px">List 2</div>
<div class="li" style="top:316px">List 3</div>
<div class="li" style="top:348px">List 4</div>
<div class="li" style="top:380px">List 5</div>
<div class="li" style="top:412px">Numbering 123</div>
<div class="li" style="top:444px">Numbering abc</div>
<div class="li" style="top:476px">Numbering ABC</div>
<div class="li" style="top:508px">Numbering ivx</div>
<div class="li" style="top:540px">Numbering IVX</div>
<div class="li" style="top:572px;color:#e8e8e8">Paragraph</div>
<div class="a" style="left:550px;top:603px;width:14px;height:14px;border:1px solid #2c2e30;border-radius:2px;background:#6a9f4c"></div>
<div class="a" style="left:553px;top:606px;width:8px;height:8px;background:#2c2e30"></div>
<svg class="a" style="left:553px;top:606px" width="8" height="8" viewBox="0 0 8 8"><path d="M1 1L7 7M7 1L1 7" stroke="#fafafa" stroke-width="2.8"/></svg>
<div class="t" style="left:573px;top:603px;letter-spacing:-.33px">Show previews</div>
<div class="a" style="left:546px;top:622px;width:298px;height:24px;border:1px solid #5c5c5c;border-radius:3px;background:linear-gradient(#f9faf9 0 10px,#cdcccd 10px 19px,#e1e0e1 19px)"></div>
<svg class="a" style="left:818px;top:629px" width="11" height="8" viewBox="0 0 11 8"><path d="M1.2 1.5L5.5 5.8L9.8 1.5" fill="none" stroke="#111" stroke-width="2.3"/></svg>
<div class="t" style="left:563px;top:628px">Hierarchical</div>

<!-- ===== styles panel icons ===== -->
<svg class="a" style="left:549px;top:213px" width="145" height="18" viewBox="0 0 145 18">
<g fill="#fafafa" stroke="#3a3d3c" stroke-width="1.1">
<circle cx="9" cy="9" r="7.4"/><circle cx="34" cy="9" r="7.4"/><circle cx="59" cy="9" r="7.4"/><circle cx="84" cy="9" r="7.4"/><circle cx="109" cy="9" r="7.4"/><circle cx="134" cy="9" r="7.4"/>
</g>
<g fill="#111">
<rect x="4.5" y="5" width="9" height="2" rx=".8"/><rect x="4.5" y="8" width="9" height="2" rx=".8"/><rect x="4.5" y="11" width="9" height="2" rx=".8"/>
</g>
<path d="M30.6 5.4H35.2C36.6 5.4 37.4 6.2 37.4 7.6V12.8H32.4C31 12.8 30.4 12 30.4 10.9C30.4 9.6 31.2 8.9 32.6 8.9H36.6" fill="none" stroke="#111" stroke-width="2.2"/>
<path d="M30.1 10.4C30.1 12 30.9 13 32.3 13.1" stroke="#2c6cd8" stroke-width="1.3" fill="none"/>
<rect x="55.2" y="6.4" width="7.4" height="4.6" fill="#dedede" stroke="#111" stroke-width="2"/>
<path d="M81.5 5H85.5L88 7.5V13H81.5Z" fill="#dedede" stroke="#111" stroke-width="1.9" stroke-linejoin="miter"/>
<rect x="105.8" y="4.6" width="2" height="2" fill="#111"/><rect x="105.8" y="8" width="2" height="2" fill="#111"/><rect x="105.8" y="11.4" width="2" height="2" fill="#111"/>
<rect x="109.8" y="4.6" width="6" height="2" fill="#111"/><rect x="109.8" y="8" width="6" height="2" fill="#111"/><rect x="109.8" y="11.4" width="6" height="2" fill="#111"/>
<rect x="130.5" y="5" width="7.5" height="8" fill="#111"/>
<rect x="131.6" y="7.3" width="1.6" height="1.2" fill="#fafafa"/><rect x="134.2" y="7.3" width="2.8" height="1.2" fill="#fafafa"/>
<rect x="131.6" y="9.8" width="1.6" height="1.2" fill="#fafafa"/><rect x="134.2" y="9.8" width="2.8" height="1.2" fill="#fafafa"/>
</svg>
<!-- fill format -->
<svg class="a" style="left:786px;top:213px" width="18" height="18" viewBox="0 0 18 18">
<path d="M4.2 5C3.2 2 5 0.8 6.5 1.2C8 1.6 8.6 3.2 7.8 5" fill="none" stroke="#111" stroke-width="1.4"/>
<path d="M5 4L13.8 8.6L10 16.8L1 12.2Z" fill="#f4f4f4" stroke="#111" stroke-width="1.5" stroke-linejoin="round"/>
<circle cx="6.8" cy="7.6" r="1.5" fill="#333"/>
<path d="M15.6 9.5V15.5" stroke="#111" stroke-width="2.6" stroke-linecap="round"/><path d="M15.6 10V15" stroke="#3aa0e8" stroke-width="1"/>
</svg>
<!-- new style from selection -->
<svg class="a" style="left:811px;top:216px" width="16" height="11" viewBox="0 0 16 11">
<path d="M3.6 0.6C1.6 0.6 0.6 1.8 0.6 3.2C0.6 4.6 1.6 5.8 3.6 5.8Z" fill="#111"/>
<rect x="3" y="0.6" width="1.6" height="9.6" fill="#111"/><rect x="5.4" y="0.6" width="1.6" height="9.6" fill="#111"/><rect x="3" y="0.6" width="4" height="1.4" fill="#111"/>
<g fill="#111"><rect x="9" y="0.7" width="6" height="1.1"/><rect x="9" y="3.6" width="6" height="1.1"/><rect x="9" y="6.5" width="6" height="1.1"/><rect x="9" y="9.4" width="6" height="1.1"/></g>
</svg>
<div class="dd" style="left:835px;top:220px"></div>
<!-- sidebar menu -->
<svg class="a" style="left:863px;top:215px" width="12" height="11" viewBox="0 0 12 11"><g fill="#111"><rect x="1" y="1" width="6.5" height="1"/><rect x="1" y="3.3" width="6.5" height="1"/><rect x="1" y="5.6" width="6.5" height="1"/><path d="M5 7.4H10.4L7.7 10.3Z"/></g></svg>
<div class="a" style="left:857px;top:239px;width:22px;height:1px;background:#a9aaa9"></div>
<!-- wrench -->
<svg class="a" style="left:856px;top:246px" width="24" height="25" viewBox="0 0 24 25">
<path d="M2.3 5.2C1.2 3.4 2 1.6 3.6 1.2L5.3 3.3L7.4 2.8L7 0.9C9 0.6 10.6 2.6 9.8 4.6L17.6 16.4C19.6 16 21.6 17.6 21.5 19.7L19.3 19.6L18.4 21.4L19.9 23C18 24 15.8 22.8 15.6 20.6L7.6 8.7C5.4 8.9 3.4 7.4 2.3 5.2Z" fill="#f6f6f6" stroke="#4a4e50" stroke-width="1.2" stroke-linejoin="round"/>
</svg>
<!-- page -->
<svg class="a" style="left:858px;top:282px" width="20" height="23" viewBox="0 0 20 23">
<path d="M1.5 1.2H13L18.5 6.5V21.5H1.5Z" fill="#fbfbfb" stroke="#4a5052" stroke-width="1.1" stroke-linejoin="round"/>
<path d="M13 1.2L13.5 5.2L18.5 6.5" fill="#e4e4e4" stroke="#6a6e70" stroke-width=".9"/>
<path d="M1.5 21.5H18.5" stroke="#2f3436" stroke-width="1.4"/>
</svg>
<!-- selected T button -->
<div class="a" style="left:852px;top:313px;width:32px;height:32px;border:1px solid #9a9b9c;border-radius:4px;background:#c9c7ca"></div>
<svg class="a" style="left:855px;top:318px" width="25" height="24" viewBox="0 0 25 24">
<path d="M3.5 1.5H21.5V6.5H20C19.5 4 18.5 3.5 16 3.5H14.3V22H9.7V3.5H8C5.5 3.5 4.5 4 4 6.5H3.5Z" fill="#111"/>
<path d="M1 7.5V23H22.5Z" fill="#4cc03a" stroke="#1e7a14" stroke-width="1"/>
<path d="M3.5 13V20.5H12Z" fill="none" stroke="#2a8a1e" stroke-width="1"/>
<path d="M5 22.2H19" stroke="#a8e898" stroke-width=".8" stroke-dasharray="1 1"/>
</svg>
<!-- gallery -->
<svg class="a" style="left:856px;top:352px" width="24" height="21" viewBox="0 0 24 21">
<path d="M8 6L12 1.2L16 6" fill="none" stroke="#333" stroke-width="1"/>
<rect x="1" y="5.5" width="22" height="14.5" rx="1" fill="#c9581a" stroke="#5a2a08" stroke-width="1"/>
<rect x="3.5" y="8" width="17" height="9.5" fill="#2a2a2a"/>
<rect x="4" y="8.5" width="16" height="3" fill="#5a8ad8"/>
<rect x="4" y="11.5" width="16" height="5.5" fill="#e88a28"/>
<ellipse cx="8" cy="15.5" rx="3" ry="1.8" fill="#fff28a"/>
<path d="M15 17V12.5L13 10M15 12.5L17.5 10" stroke="#111" stroke-width="1.2" fill="none"/>
</svg>
<!-- navigator -->
<svg class="a" style="left:856px;top:387px" width="24" height="24" viewBox="0 0 24 24">
<circle cx="12" cy="12" r="10.5" fill="#e8e8e8" stroke="#5a5e60" stroke-width="1.3"/>
<circle cx="12" cy="12" r="8.6" fill="#fafafa" stroke="#3c3c3c" stroke-width="1.2"/>
<path d="M6.3 6.3L13.2 10.8L10.8 13.2Z" fill="#e3160c"/>
<path d="M17.7 17.7L10.8 13.2L13.2 10.8Z" fill="#383838"/>
<circle cx="12" cy="12" r="1" fill="#2c6cd0"/>
</svg>
<!-- manage changes -->
<svg class="a" style="left:856px;top:421px" width="25" height="25" viewBox="0 0 25 25">
<path d="M1.5 1.2H14L19.5 6.5V22.5H1.5Z" fill="#fbfbfb" stroke="#3a3e40" stroke-width="1.1" stroke-linejoin="round"/>
<path d="M14 1.2V6.5H19.5" fill="none" stroke="#6a6e70" stroke-width=".9"/>
<rect x="1.5" y="22" width="18" height="1.3" fill="#2a2e30"/>
<rect x="4" y="5" width="6" height="1.2" fill="#d83028"/><rect x="4" y="8" width="11" height="1.2" fill="#555"/><rect x="6" y="8" width="5" height="1.2" fill="#d83028"/>
<rect x="4" y="11" width="11" height="1.2" fill="#555"/><rect x="4" y="14" width="6" height="1.2" fill="#d83028"/><rect x="4" y="17" width="5" height="1.2" fill="#555"/>
<path d="M9 22.5L10 19L21 8L23.5 10.5L12.5 21.5Z" fill="#f0a030" stroke="#5a2a08" stroke-width="1"/>
<path d="M21 8L22.5 6.5L25 9L23.5 10.5Z" fill="#e02010"/>
</svg>
<!-- T (styles) -->
<svg class="a" style="left:855px;top:458px" width="25" height="24" viewBox="0 0 25 24">
<path d="M3.5 1.5H21.5V6.5H20C19.5 4 18.5 3.5 16 3.5H14.3V22H9.7V3.5H8C5.5 3.5 4.5 4 4 6.5H3.5Z" fill="#111"/>
<path d="M1 7.5V23H22.5Z" fill="#4cc03a" stroke="#1e7a14" stroke-width="1"/>
<path d="M3.5 13V20.5H12Z" fill="none" stroke="#2a8a1e" stroke-width="1"/>
<path d="M5 22.2H19" stroke="#a8e898" stroke-width=".8" stroke-dasharray="1 1"/>
</svg>
<!-- mouse cursor -->
<svg class="a" style="left:652px;top:421px" width="16" height="22" viewBox="0 0 16 22">
<path d="M1.5 1.2V17.5L5.3 13.8L8.2 20.2L11 19L8.2 12.8H13.8Z" fill="#fff" stroke="#000" stroke-width="1.6" stroke-linejoin="round"/>
</svg>

</body></html>
